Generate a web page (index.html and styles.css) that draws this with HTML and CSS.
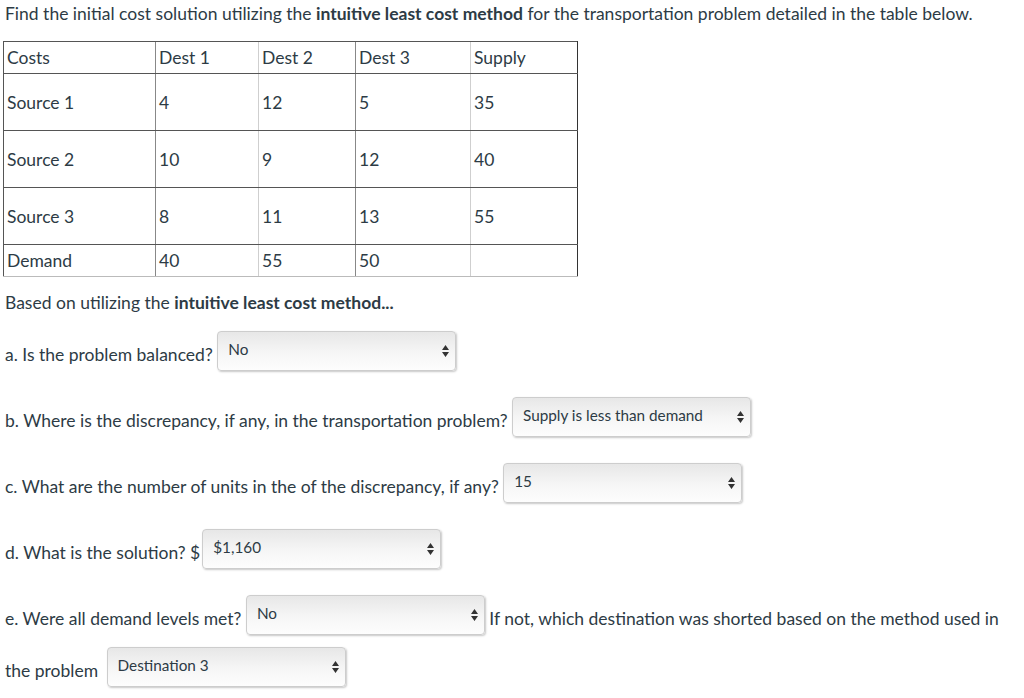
FILE: index.html
```html
<!DOCTYPE html>
<html lang="en">
<head>
<meta charset="utf-8">
<title>Intuitive least cost method</title>
<link rel="stylesheet" href="styles.css">
</head>
<body>
<div class="page">
  <p class="intro">Find the initial cost solution utilizing the <strong>intuitive least cost method</strong> for the transportation problem detailed in the table below.</p>

  <table class="costs">
    <colgroup>
      <col class="c0"><col class="c1"><col class="c2"><col class="c3"><col class="c4">
    </colgroup>
    <tr class="head">
      <td class="k">Costs</td><td class="d1">Dest 1</td><td class="d2">Dest 2</td><td class="d3">Dest 3</td><td class="s">Supply</td>
    </tr>
    <tr class="tall">
      <td class="k">Source 1</td><td class="d1">4</td><td class="d2">12</td><td class="d3">5</td><td class="s">35</td>
    </tr>
    <tr class="tall">
      <td class="k">Source 2</td><td class="d1">10</td><td class="d2">9</td><td class="d3">12</td><td class="s">40</td>
    </tr>
    <tr class="tall">
      <td class="k">Source 3</td><td class="d1">8</td><td class="d2">11</td><td class="d3">13</td><td class="s">55</td>
    </tr>
    <tr class="head last">
      <td class="k">Demand</td><td class="d1">40</td><td class="d2">55</td><td class="d3">50</td><td class="s"></td>
    </tr>
  </table>

  <p class="lead">Based on utilizing the <strong>intuitive least cost method...</strong></p>

  <p class="q">a. Is the problem balanced? <span class="sel"><span class="val">No</span><svg class="arr" viewBox="0 0 7 12" width="7" height="12"><path d="M0 5 L3.5 0 L7 5 Z M0 7 L7 7 L3.5 12 Z"/></svg></span></p>

  <p class="q">b. Where is the discrepancy, if any, in the transportation problem? <span class="sel"><span class="val">Supply is less than demand</span><svg class="arr" viewBox="0 0 7 12" width="7" height="12"><path d="M0 5 L3.5 0 L7 5 Z M0 7 L7 7 L3.5 12 Z"/></svg></span></p>

  <p class="q">c. What are the number of units in the of the discrepancy, if any? <span class="sel"><span class="val">15</span><svg class="arr" viewBox="0 0 7 12" width="7" height="12"><path d="M0 5 L3.5 0 L7 5 Z M0 7 L7 7 L3.5 12 Z"/></svg></span></p>

  <p class="q">d. What is the solution? $<span class="sel gap1"><span class="val">$1,160</span><svg class="arr" viewBox="0 0 7 12" width="7" height="12"><path d="M0 5 L3.5 0 L7 5 Z M0 7 L7 7 L3.5 12 Z"/></svg></span></p>

  <p class="q">e. Were all demand levels met? <span class="sel"><span class="val">No</span><svg class="arr" viewBox="0 0 7 12" width="7" height="12"><path d="M0 5 L3.5 0 L7 5 Z M0 7 L7 7 L3.5 12 Z"/></svg></span> If not, which destination was shorted based on the method used in the problem <span class="sel wide-left"><span class="val">Destination 3</span><svg class="arr" viewBox="0 0 7 12" width="7" height="12"><path d="M0 5 L3.5 0 L7 5 Z M0 7 L7 7 L3.5 12 Z"/></svg></span></p>
</div>
</body>
</html>
```

FILE: styles.css
```css
html, body {
  margin: 0;
  padding: 0;
  background: #ffffff;
}

body {
  font-family: Lato, "Open Sans", "Liberation Sans", sans-serif;
  font-size: 17.5px;
  line-height: 24px;
  color: #2d3b45;
}

.page {
  padding: 2px 5px 0 5px;
  width: 1014px;
}

p {
  margin: 0;
}

strong {
  font-weight: 700;
}

.intro {
  margin-bottom: 15px;
}

.costs {
  border-collapse: collapse;
  margin-left: -2px;
  border: 1px solid #555;
  border-right-color: #333;
  border-bottom-color: #bbb;
}

.costs col.c0 { width: 152px; }
.costs col.c1 { width: 103px; }
.costs col.c2 { width: 97px; }
.costs col.c3 { width: 115px; }
.costs col.c4 { width: 107px; }

.costs td {
  padding: 1px 3px 0 3px;
  border-top: 1px solid #555;
  border-bottom: 1px solid #555;
  vertical-align: middle;
  text-align: left;
}

.costs tr.last td {
  border-bottom-color: #bbb;
}

.costs td.d1 { border-left: 1px solid #888; }
.costs td.d2 { border-left: 1px solid #cfcfcf; }
.costs td.d3 { border-left: 1px solid #888; }
.costs td.s { border-left: 1px solid #cfcfcf; border-right: 1px solid #333; }

.costs tr.head td { height: 30px; }
.costs tr.tall td { height: 55px; }

.lead {
  margin-top: 14px;
  margin-bottom: 10px;
}

.q {
  margin-bottom: 14px;
}

.sel {
  display: inline-flex;
  justify-content: space-between;
  box-sizing: border-box;
  width: 239px;
  height: 40px;
  margin: 6px 0;
  padding: 8px 6px 0 10px;
  vertical-align: 6px;
  border: 1px solid #cdcdcd;
  border-radius: 4px;
  background: linear-gradient(to bottom, #e7e7e7 0%, #f6f6f6 55%, #fdfdfd 100%);
  box-shadow: 1px 1px 2px rgba(0, 0, 0, 0.22);
  font-size: 15.3px;
  line-height: 18px;
  color: #2d3b45;
  white-space: nowrap;
}

.gap1 {
  margin-left: 2px;
}

.wide-left {
  margin-left: 4px;
}

.sel .val {
  display: block;
}

.sel .arr {
  align-self: center;
  margin-top: -8px;
  fill: #333;
  flex: none;
}
```
